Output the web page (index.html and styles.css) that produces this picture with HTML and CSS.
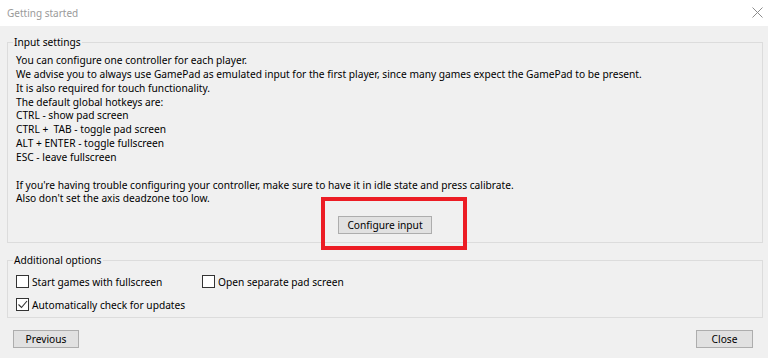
FILE: index.html
```html
<!DOCTYPE html>
<html>
<head>
<meta charset="utf-8">
<link rel="stylesheet" href="styles.css">
</head>
<body>
<div class="window">
  <div class="titlebar">
    <span class="title">Getting started</span>
    <svg class="close-x" width="11" height="11" viewBox="0 0 11 11"><path d="M0.5 0.5 L10.5 10.5 M10.5 0.5 L0.5 10.5" stroke="#8c8c8c" stroke-width="1" fill="none"/></svg>
  </div>
  <div class="content">
    <fieldset class="group group-input">
      <legend>Input settings</legend>
      <div class="info">
        <div>You can configure one controller for each player.</div>
        <div>We advise you to always use GamePad as emulated input for the first player, since many games expect the GamePad to be present.</div>
        <div>It is also required for touch functionality.</div>
        <div>The default global hotkeys are:</div>
        <div>CTRL - show pad screen</div>
        <div>CTRL + &nbsp;TAB - toggle pad screen</div>
        <div>ALT + ENTER - toggle fullscreen</div>
        <div>ESC - leave fullscreen</div>
        <div>&nbsp;</div>
        <div>If you're having trouble configuring your controller, make sure to have it in idle state and press calibrate.</div>
        <div>Also don't set the axis deadzone too low.</div>
      </div>
      <div class="configure-row">
        <div class="configure-wrap">
          <button class="btn btn-configure">Configure input</button>
          <div class="highlight"></div>
        </div>
      </div>
    </fieldset>
    <fieldset class="group group-options">
      <legend>Additional options</legend>
      <div class="options-grid">
        <label class="check"><span class="box"></span>Start games with fullscreen</label>
        <label class="check"><span class="box"></span>Open separate pad screen</label>
        <label class="check"><span class="box checked"><svg width="11" height="11" viewBox="0 0 11 11"><path d="M1.5 5.5 L4.5 8.5 L10 2" stroke="#333" stroke-width="1.1" fill="none"/></svg></span>Automatically check for updates</label>
      </div>
    </fieldset>
    <div class="footer">
      <button class="btn btn-prev">Previous</button>
      <button class="btn btn-close">Close</button>
    </div>
  </div>
</div>
</body>
</html>
```

FILE: styles.css
```css
* { box-sizing: border-box; }
html, body {
  margin: 0;
  padding: 0;
  width: 768px;
  height: 358px;
  overflow: hidden;
  background: #f0f0f0;
  font-family: "Noto Sans", "Segoe UI", sans-serif;
  font-size: 10.2px;
  color: #000;
}
.window {
  width: 768px;
  height: 358px;
  display: flex;
  flex-direction: column;
}
.titlebar {
  height: 26px;
  background: #fff;
  display: flex;
  align-items: center;
  justify-content: space-between;
  padding: 0 5px 0 7px;
}
.title {
  color: #9a9a9a;
  font-size: 10px;
  margin-top: -1px;
}
.close-x { margin-top: -2px; }
.content {
  padding: 0 5px 0 7px;
  display: flex;
  flex-direction: column;
}
.group {
  margin: 0;
  border: 1px solid #dcdcdc;
  padding: 0 8px 0 8px;
  min-width: 0;
}
.group legend {
  padding: 0 1px;
  margin-left: -3px;
  line-height: 14px;
  height: 14px;
}
.group-input {
  margin-top: 9px;
  padding-top: 5px;
  padding-bottom: 8px;
}
.info {
  line-height: 13.85px;
  white-space: nowrap;
}
.configure-row {
  display: flex;
  justify-content: center;
  margin-top: 10px;
}
.configure-wrap {
  position: relative;
}
.highlight {
  position: absolute;
  left: -17px;
  top: -19px;
  width: 146px;
  height: 53px;
  border: 4px solid #ec1c24;
  pointer-events: none;
}
.btn {
  font-family: inherit;
  font-size: 10.2px;
  background: #e1e1e1;
  border: 1px solid #adadad;
  border-radius: 0;
  height: 18px;
  padding: 0;
  color: #000;
  line-height: 16px;
}
.btn-configure { width: 94px; }
.group-options {
  margin-top: 10px;
  padding-top: 8px;
  padding-bottom: 6px;
}
.options-grid {
  display: grid;
  grid-template-columns: 186px auto;
  row-gap: 10px;
}
.check {
  display: flex;
  align-items: center;
  gap: 3px;
  height: 13px;
  white-space: nowrap;
}
.box {
  width: 13px;
  height: 13px;
  border: 1px solid #333;
  background: #fff;
  display: flex;
  align-items: center;
  justify-content: center;
  flex: none;
}
.footer {
  display: flex;
  justify-content: space-between;
  padding: 12px 10px 0 6px;
}
.btn-prev { width: 66px; }
.btn-close { width: 57px; }
```
